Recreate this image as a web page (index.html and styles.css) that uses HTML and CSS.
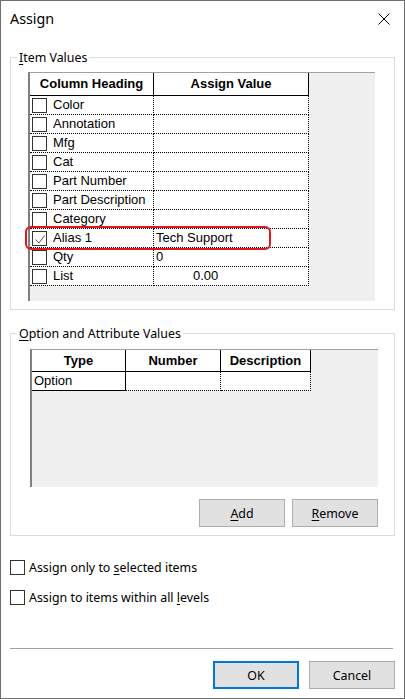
FILE: index.html
```html
<!DOCTYPE html>
<html>
<head>
<meta charset="utf-8">
<link rel="stylesheet" href="styles.css">
</head>
<body>
<div class="window">
  <div class="titlebar">
    <span class="title">Assign</span>
    <svg class="close" width="12" height="12" viewBox="0 0 12 12"><path d="M0.5 0.5L11.5 11.5M11.5 0.5L0.5 11.5" stroke="#000" stroke-width="1" fill="none"/></svg>
  </div>
  <div class="content">
    <fieldset class="group">
      <legend><u>I</u>tem Values</legend>
      <div class="gbody g1">
        <div class="grid grid1">
          <div class="hrow cols1">
            <div class="hcell tall">Column Heading</div>
            <div class="hcell tall">Assign Value</div>
          </div>
          <div class="drow cols1"><div class="dcell"><span class="cb"></span><span>Color</span></div><div class="dcell val"></div></div>
          <div class="drow cols1"><div class="dcell"><span class="cb"></span><span>Annotation</span></div><div class="dcell val"></div></div>
          <div class="drow cols1"><div class="dcell"><span class="cb"></span><span>Mfg</span></div><div class="dcell val"></div></div>
          <div class="drow cols1"><div class="dcell"><span class="cb"></span><span>Cat</span></div><div class="dcell val"></div></div>
          <div class="drow cols1"><div class="dcell"><span class="cb"></span><span>Part Number</span></div><div class="dcell val"></div></div>
          <div class="drow cols1"><div class="dcell"><span class="cb"></span><span>Part Description</span></div><div class="dcell val"></div></div>
          <div class="drow cols1"><div class="dcell"><span class="cb"></span><span>Category</span></div><div class="dcell val"></div></div>
          <div class="drow cols1"><div class="dcell"><span class="cb"><svg width="13" height="13" viewBox="0 0 13 13"><path d="M2.5 7.5L6 11L11.5 3.5" stroke="#555" stroke-width="1" fill="none"/></svg></span><span>Alias 1</span></div><div class="dcell val">Tech Support</div></div>
          <div class="drow cols1"><div class="dcell"><span class="cb"></span><span>Qty</span></div><div class="dcell val">0</div></div>
          <div class="drow cols1"><div class="dcell"><span class="cb"></span><span>List</span></div><div class="dcell val num">0.00</div></div>
          <div class="highlight"></div>
        </div>
      </div>
    </fieldset>

    <fieldset class="group g2wrap">
      <legend><u>O</u>ption and Attribute Values</legend>
      <div class="gbody g2">
        <div class="grid grid2">
          <div class="hrow cols2">
            <div class="hcell">Type</div>
            <div class="hcell">Number</div>
            <div class="hcell">Description</div>
          </div>
          <div class="drow cols2">
            <div class="dcell current">Option</div>
            <div class="dcell"></div>
            <div class="dcell"></div>
          </div>
        </div>
        <div class="btnrow">
          <div class="btn"><span><u>A</u>dd</span></div>
          <div class="btn"><span><u>R</u>emove</span></div>
        </div>
      </div>
    </fieldset>

    <div class="checks">
      <div class="check"><span class="cb"></span><span>Assign only to <u>s</u>elected items</span></div>
      <div class="check"><span class="cb"></span><span>Assign to items within all <u>l</u>evels</span></div>
    </div>

    <div class="separator"></div>

    <div class="footer">
      <div class="btn default"><span>OK</span></div>
      <div class="btn"><span>Cancel</span></div>
    </div>
  </div>
</div>
</body>
</html>
```

FILE: styles.css
```css
* { box-sizing: border-box; }
html, body { margin: 0; padding: 0; background: #fff; }
body { font-family: "Noto Sans", "Open Sans", sans-serif; font-size: 12.4px; color: #000; }

.window {
  width: 405px;
  height: 699px;
  border: 1px solid #6f6f6f;
  background: #fff;
  overflow: hidden;
}

.titlebar {
  height: 48px;
  display: flex;
  justify-content: space-between;
  align-items: flex-start;
  padding: 8px 14px 0 9px;
}
.title { font-size: 14.3px; line-height: 20px; }
.close { margin-top: 4px; display: block; }

.content { padding: 0 9px; }

.group {
  margin: 0;
  padding: 0;
  border: 1px solid #dcdcdc;
  min-width: 0;
}
.group legend {
  margin-left: 6px;
  padding: 0 2px;
  line-height: 17px;
  height: 17px;
}
.g2wrap { margin-top: 15px; }

.gbody.g1 { padding: 6px 19px 8px 17px; }
.gbody.g2 { padding: 7px 16px 8px 19px; }

u { text-decoration: underline; text-underline-offset: 2px; }

.grid {
  position: relative;
  background: #f0f0f0;
  border-top: 1px solid #a0a0a0;
  border-left: 2px solid #808080;
  font-family: "Liberation Sans", Arial, sans-serif;
  font-size: 13px;
}
.grid1 { width: 347px; height: 229px; }
.grid2 { width: 348px; height: 138px; }

.hrow, .drow { display: grid; }
.cols1 { grid-template-columns: 124px 155px; width: 279px; }
.cols2 { grid-template-columns: 94px 95px 90px; width: 279px; }

.hcell {
  height: 22px;
  line-height: 21px;
  background: #fff;
  border-right: 1px solid #000;
  border-bottom: 1px solid #000;
  text-align: center;
  font-weight: bold;
  white-space: nowrap;
}
.hcell.tall { height: 23px; line-height: 22px; }

.dcell {
  height: 19px;
  line-height: 18px;
  background: #fff;
  border-right: 1px dotted #000;
  border-bottom: 1px dotted #000;
  display: flex;
  align-items: center;
  white-space: nowrap;
  padding-left: 2px;
}
.dcell.num { padding-left: 39px; }
.dcell.current {
  border-right: 1px solid #000;
  border-bottom: 1px solid #000;
}

.cb {
  width: 15px;
  height: 15px;
  border: 1px solid #333;
  background: #fff;
  flex: none;
  display: flex;
  align-items: center;
  justify-content: center;
}
.dcell .cb { margin-right: 6px; }
.cb svg { display: block; }

.highlight {
  position: absolute;
  left: -5px;
  top: 153px;
  width: 246px;
  height: 24px;
  border: 2px solid #e3141e;
  border-radius: 6px;
}

.btnrow {
  margin-top: 12px;
  display: flex;
  justify-content: flex-end;
  gap: 7px;
}
.btn {
  width: 86px;
  height: 28px;
  background: #e1e1e1;
  border: 1px solid #adadad;
  display: flex;
  align-items: center;
  justify-content: center;
  line-height: 16px;
  padding-top: 1px;
}
.btn.default { border: 2px solid #0078d7; }

.checks {
  margin-top: 24px;
  display: flex;
  flex-direction: column;
  gap: 15px;
}
.check {
  display: flex;
  align-items: center;
  height: 15px;
  line-height: 16px;
  white-space: nowrap;
}
.check .cb { margin-right: 4px; }
.check > span:last-child { padding-top: 1px; }

.separator {
  margin-top: 43px;
  margin-right: 2px;
  height: 1px;
  background: #a0a0a0;
}

.footer {
  margin-top: 12px;
  display: flex;
  justify-content: flex-end;
  gap: 10px;
}
```
